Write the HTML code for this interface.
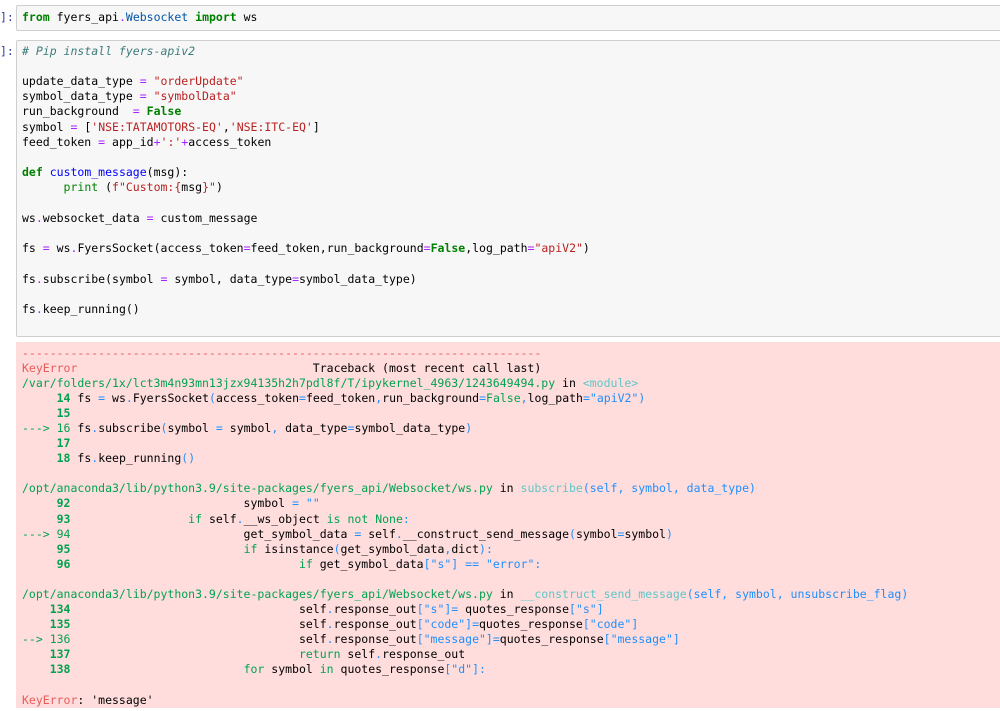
<!DOCTYPE html>
<html><head><style>
body{margin:0;width:1000px;height:711px;background:#fff;overflow:hidden;position:relative;font-family:"DejaVu Sans Mono","Liberation Mono",monospace;}
.box{position:absolute;left:16px;right:-2px;background:#f7f7f7;border:1px solid #cfcfcf;border-radius:2px;}
pre{position:absolute;left:22px;margin:0;font-family:"DejaVu Sans Mono","Liberation Mono",monospace;font-size:11.5px;line-height:15.1px;color:#000;}
.p{position:absolute;left:0;font-size:11.5px;color:#303F9F;}
.k{color:#008000;font-weight:bold}.s{color:#BA2121}.o{color:#AA22FF}.c{color:#3D7B7B;font-style:italic}.n{color:#0055AA}.f{color:#0000FF}
.err{position:absolute;left:16px;right:0;top:342px;height:366px;background:#fdd;}
.r{color:#e75c58}.g{color:#00a250}.gb{color:#00a250;font-weight:bold}.cy{color:#60c6c8}.b{color:#208ffb}
</style></head><body>
<div class="p" style="top:10px">]:</div>
<div class="box" style="top:5px;height:24px"></div>
<pre style="top:9.5px"><span class="k">from</span> fyers_api<span class="o">.</span><span class="n">Websocket</span> <span class="k">import</span> ws</pre>
<div class="p" style="top:44px">]:</div>
<div class="box" style="top:40px;height:295px"></div>
<pre style="top:43.5px;line-height:15.2px"><span class="c"># Pip install fyers-apiv2</span>

update_data_type <span class="o">=</span> <span class="s">"orderUpdate"</span>
symbol_data_type <span class="o">=</span> <span class="s">"symbolData"</span>
run_background  <span class="o">=</span> <span class="k">False</span>
symbol <span class="o">=</span> [<span class="s">'NSE:TATAMOTORS-EQ'</span>,<span class="s">'NSE:ITC-EQ'</span>]
feed_token <span class="o">=</span> app_id<span class="o">+</span><span class="s">':'</span><span class="o">+</span>access_token

<span class="k">def</span> <span class="f">custom_message</span>(msg):
      <span style="color:#008000">print</span> (<span class="s">f"Custom:</span><span class="s">{</span>msg<span class="s">}</span><span class="s">"</span>)

ws<span class="o">.</span>websocket_data <span class="o">=</span> custom_message

fs <span class="o">=</span> ws<span class="o">.</span>FyersSocket(access_token<span class="o">=</span>feed_token,run_background<span class="o">=</span><span class="k">False</span>,log_path<span class="o">=</span><span class="s">"apiV2"</span>)

fs<span class="o">.</span>subscribe(symbol <span class="o">=</span> symbol, data_type<span class="o">=</span>symbol_data_type)

fs<span class="o">.</span>keep_running()</pre>
<div class="err"></div>
<pre style="top:345.5px;color:#000"><span class="r">---------------------------------------------------------------------------</span>
<span class="r">KeyError</span>                                  Traceback (most recent call last)
<span class="g">/var/folders/1x/lct3m4n93mn13jzx94135h2h7pdl8f/T/ipykernel_4963/1243649494.py</span> in <span class="cy">&lt;module&gt;</span>
<span class="gb">     14</span> fs <span class="b">=</span> ws<span class="b">.</span>FyersSocket<span class="b">(</span>access_token<span class="b">=</span>feed_token<span class="b">,</span>run_background<span class="b">=</span><span class="g">False</span><span class="b">,</span>log_path<span class="b">=</span><span class="b">"apiV2"</span><span class="b">)</span>
<span class="gb">     15</span>
<span class="g">---&gt; 16</span> fs<span class="b">.</span>subscribe<span class="b">(</span>symbol <span class="b">=</span> symbol<span class="b">,</span> data_type<span class="b">=</span>symbol_data_type<span class="b">)</span>
<span class="gb">     17</span>
<span class="gb">     18</span> fs<span class="b">.</span>keep_running<span class="b">()</span>

<span class="g">/opt/anaconda3/lib/python3.9/site-packages/fyers_api/Websocket/ws.py</span> in <span class="cy">subscribe</span><span class="b">(self, symbol, data_type)</span>
<span class="gb">     92</span>                         symbol <span class="b">=</span> <span class="b">""</span>
<span class="gb">     93</span>                 <span class="g">if</span> self<span class="b">.</span>__ws_object <span class="g">is</span> <span class="g">not</span> <span class="g">None</span><span class="b">:</span>
<span class="g">---&gt; 94</span>                         get_symbol_data <span class="b">=</span> self<span class="b">.</span>__construct_send_message<span class="b">(</span>symbol<span class="b">=</span>symbol<span class="b">)</span>
<span class="gb">     95</span>                         <span class="g">if</span> isinstance<span class="b">(</span>get_symbol_data<span class="b">,</span>dict<span class="b">):</span>
<span class="gb">     96</span>                                 <span class="g">if</span> get_symbol_data<span class="b">["s"]</span> <span class="b">==</span> <span class="b">"error":</span>

<span class="g">/opt/anaconda3/lib/python3.9/site-packages/fyers_api/Websocket/ws.py</span> in <span class="cy">__construct_send_message</span><span class="b">(self, symbol, unsubscribe_flag)</span>
<span class="gb">    134</span>                                 self<span class="b">.</span>response_out<span class="b">["s"]=</span> quotes_response<span class="b">["s"]</span>
<span class="gb">    135</span>                                 self<span class="b">.</span>response_out<span class="b">["code"]=</span>quotes_response<span class="b">["code"]</span>
<span class="g">--&gt; 136</span>                                 self<span class="b">.</span>response_out<span class="b">["message"]=</span>quotes_response<span class="b">["message"]</span>
<span class="gb">    137</span>                                 <span class="g">return</span> self<span class="b">.</span>response_out
<span class="gb">    138</span>                         <span class="g">for</span> symbol <span class="g">in</span> quotes_response<span class="b">["d"]:</span>

<span class="r">KeyError</span>: 'message'</pre>
</body></html>
